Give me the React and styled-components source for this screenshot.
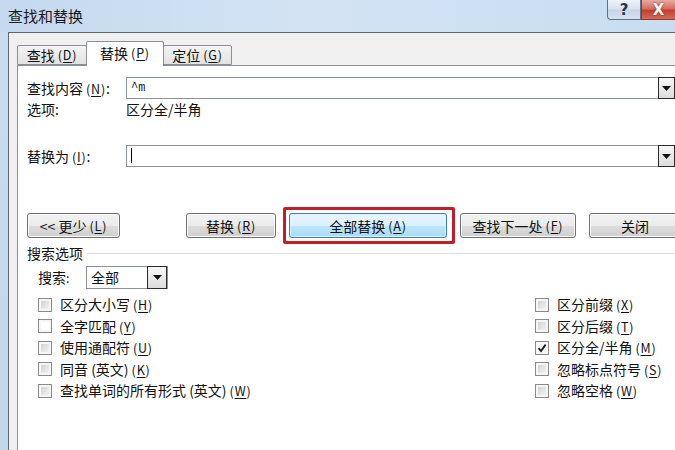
import React from "react";
import styled, { createGlobalStyle } from "styled-components";

const GlobalStyle = createGlobalStyle`
  body {
    margin: 0;
    background: #ffffff;
    font-family: "Noto Sans CJK SC", "Liberation Sans", sans-serif;
    color: #111;
  }
`;

const Window = styled.div`
  width: 675px;
  height: 450px;
  overflow: hidden;
  display: flex;
  flex-direction: column;
  background: linear-gradient(180deg, #cadcf0, #c2d6ec);
`;

const TitleBar = styled.div`
  height: 32px;
  flex-shrink: 0;
  display: flex;
  justify-content: space-between;
  align-items: flex-start;
  background: linear-gradient(90deg, #c4d9ef 0%, #d3e3f4 45%, #cde0f3 75%, #c9ddf1 100%);
`;

const Title = styled.div`
  padding: 7px 0 0 8px;
  font-size: 15px;
  line-height: 18px;
  color: #1a1a1a;
`;

const Controls = styled.div`
  display: flex;
`;

const CtrlButton = styled.div`
  width: ${(p) => (p.close ? "34px" : "34px")};
  height: 20px;
  display: flex;
  align-items: center;
  justify-content: center;
  box-sizing: border-box;
  border: 1px solid ${(p) => (p.close ? "#8e3a34" : "#5f7086")};
  border-top: none;
  border-right: ${(p) => (p.close ? "none" : "1px solid #5f7086")};
  border-radius: ${(p) => (p.close ? "0" : "0 0 0 4px")};
  background: ${(p) =>
    p.close
      ? "linear-gradient(180deg, #e9aaa0 0%, #d4705f 45%, #c4402e 55%, #d56b55 100%)"
      : "linear-gradient(180deg, #eef3f9 0%, #d9e3ee 45%, #c5d3e3 55%, #d8e3ef 100%)"};
  font: bold 15px "DejaVu Sans", sans-serif;
  color: ${(p) => (p.close ? "#fff" : "#1f3552")};
  text-shadow: ${(p) => (p.close ? "0 0 2px #6b1a12" : "none")};
`;

const Frame = styled.div`
  flex: 1;
  display: flex;
  padding-left: 8px;
  min-height: 0;
`;

const Dialog = styled.div`
  flex: 1;
  display: flex;
  flex-direction: column;
  background: #f0f0f0;
  border-left: 1px solid #5e6670;
  border-top: 1px solid #5e6670;
  padding: 8px 0 0 8px;
  min-height: 0;
`;

const TabStrip = styled.div`
  display: flex;
  align-items: flex-end;
  height: 24px;
  padding-left: 1px;
  position: relative;
  z-index: 1;
`;

const Tab = styled.div`
  box-sizing: border-box;
  width: ${(p) => p.w}px;
  height: ${(p) => (p.active ? "25px" : "20px")};
  margin-bottom: ${(p) => (p.active ? "-1px" : "0")};
  margin-left: -1px;
  border: 1px solid #8b8e96;
  border-bottom: ${(p) => (p.active ? "none" : "1px solid #8b8e96")};
  border-radius: 2px 2px 0 0;
  background: ${(p) =>
    p.active ? "#ffffff" : "linear-gradient(180deg, #f4f4f4, #e2e2e2)"};
  display: flex;
  align-items: center;
  justify-content: center;
  font-size: 14px;
  line-height: 18px;
  padding-bottom: ${(p) => (p.active ? "3px" : "0")};
`;

const Panel = styled.div`
  flex: 1;
  background: #ffffff;
  border: 1px solid #8b8e96;
  border-right: none;
  border-bottom: none;
  padding-left: 9px;
  display: flex;
  flex-direction: column;
`;

const FieldRow = styled.div`
  display: flex;
  align-items: center;
  height: 22px;
  margin-top: ${(p) => p.top}px;
`;

const Label = styled.div`
  width: ${(p) => p.w || 99}px;
  flex-shrink: 0;
  font-size: 14px;
  line-height: 18px;
  white-space: nowrap;
`;

const Key = styled.span`
  font-size: 12.5px;
  letter-spacing: 0.8px;
  margin-left: ${(p) => (p.tight ? "0" : "3px")};
  u {
    text-decoration-thickness: 1px;
    text-underline-offset: 2px;
  }
`;

const Combo = styled.div`
  width: 549px;
  height: 22px;
  box-sizing: border-box;
  display: flex;
  border: 1px solid #8e9299;
  border-right: none;
  background: #fff;
  flex-shrink: 0;
`;

const ComboText = styled.div`
  flex: 1;
  padding-left: 4px;
  font: 12px "Liberation Mono", monospace;
  line-height: 20px;
  color: #222;
`;

const Caret = styled.span`
  display: inline-block;
  width: 1px;
  height: 15px;
  margin-top: 2px;
  background: #000;
`;

const DropButton = styled.div`
  width: ${(p) => p.w || 17}px;
  box-sizing: border-box;
  border: 1px solid #2b2b2b;
  margin: -1px 0;
  background: linear-gradient(180deg, #f7f7f7, #dcdcdc);
  display: flex;
  align-items: center;
  justify-content: center;
`;

const Text = styled.div`
  font-size: 14px;
  line-height: 18px;
  margin-top: ${(p) => p.top || 0}px;
  display: flex;
  align-items: center;
`;

const ButtonRow = styled.div`
  display: flex;
  align-items: center;
  gap: 13px;
  margin-top: 46px;
  height: 25px;
`;

const Button = styled.div`
  box-sizing: border-box;
  width: ${(p) => p.w}px;
  height: 25px;
  flex-shrink: 0;
  margin-right: ${(p) => p.after || 0}px;
  border: 1px solid ${(p) => (p.focused ? "#3c7fb1" : "#707070")};
  border-radius: 3px;
  box-shadow: inset 0 0 0 1px ${(p) => (p.focused ? "#dff2fc" : "#fbfbfb")};
  background: ${(p) =>
    p.focused
      ? "linear-gradient(180deg, #eaf6fd 0%, #d9f0fc 50%, #bee6fd 52%, #a9dbf6 100%)"
      : "linear-gradient(180deg, #f2f2f2 0%, #ebebeb 50%, #dddddd 52%, #cfcfcf 100%)"};
  display: flex;
  align-items: center;
  justify-content: center;
  font-size: 14px;
  line-height: 18px;
  white-space: nowrap;
`;

const Highlight = styled.div`
  display: flex;
  margin: -6px -8px -6px -6px;
  padding: 3px 5px 3px 3px;
  border: 3px solid #c41d2a;
  border-radius: 2px;
`;

const Section = styled.div`
  display: flex;
  align-items: center;
  gap: 4px;
  margin-top: 6px;
  height: 18px;
  font-size: 14px;
  line-height: 18px;
  &::after {
    content: "";
    flex: 1;
    height: 1px;
    background: #d5dde5;
  }
`;

const SearchRow = styled.div`
  display: flex;
  align-items: center;
  margin-top: 4px;
  padding-left: 11px;
  height: 23px;
`;

const Select = styled.div`
  width: 82px;
  height: 23px;
  box-sizing: border-box;
  border: 1px solid #8e9299;
  display: flex;
  background: #fff;
`;

const SelectText = styled.div`
  flex: 1;
  padding-left: 4px;
  font-size: 14px;
  line-height: 21px;
`;

const Options = styled.div`
  display: grid;
  grid-template-columns: 497px 1fr;
  grid-auto-flow: column;
  grid-template-rows: repeat(5, 21.5px);
  margin-top: 5px;
  padding-left: 11px;
`;

const Option = styled.div`
  display: flex;
  align-items: center;
  gap: 8px;
  font-size: 14px;
  line-height: 18px;
  white-space: nowrap;
`;

const Box = styled.div`
  width: 14px;
  height: 14px;
  box-sizing: border-box;
  flex-shrink: 0;
  border: 1px solid #8a8a8a;
  background: ${(p) =>
    p.plain
      ? "#fff"
      : p.checked
      ? "#f4f4f4"
      : "linear-gradient(135deg, #c4c8ce 0%, #e4e6e9 55%, #f6f6f6 100%)"};
  box-shadow: inset 0 0 0 2px #f6f6f6;
  display: flex;
  align-items: center;
  justify-content: center;
`;

const Arrow = () => (
  <svg width="9" height="5" viewBox="0 0 9 5">
    <polygon points="0,0 9,0 4.5,5" fill="#111" />
  </svg>
);

const Check = () => (
  <svg width="10" height="10" viewBox="0 0 10 10">
    <path d="M1.5 5.2 L4 8 L8.6 1.6" fill="none" stroke="#1c1c1c" strokeWidth="1.8" />
  </svg>
);

const K = ({ k }) => (
  <Key>
    (<u>{k}</u>)
  </Key>
);

const leftOptions = [
  ["区分大小写", "H", ""],
  ["全字匹配", "Y", "plain"],
  ["使用通配符", "U", ""],
  ["同音 (英文)", "K", ""],
  ["查找单词的所有形式 (英文)", "W", ""],
];

const rightOptions = [
  ["区分前缀", "X", ""],
  ["区分后缀", "T", ""],
  ["区分全/半角", "M", "checked"],
  ["忽略标点符号", "S", ""],
  ["忽略空格", "W", ""],
];

function App() {
  return (
    <Window>
      <GlobalStyle />
      <TitleBar>
        <Title>查找和替换</Title>
        <Controls>
          <CtrlButton>?</CtrlButton>
          <CtrlButton close>X</CtrlButton>
        </Controls>
      </TitleBar>
      <Frame>
        <Dialog>
          <TabStrip>
            <Tab w={70}>
              查找<K k="D" />
            </Tab>
            <Tab w={78} active>
              替换<K k="P" />
            </Tab>
            <Tab w={69}>
              定位<K k="G" />
            </Tab>
          </TabStrip>
          <Panel>
            <FieldRow top={11}>
              <Label>
                查找内容<K k="N" />:
              </Label>
              <Combo>
                <ComboText>^m</ComboText>
                <DropButton>
                  <Arrow />
                </DropButton>
              </Combo>
            </FieldRow>
            <Text top={1}>
              <Label>选项:</Label>区分全/半角
            </Text>
            <FieldRow top={27}>
              <Label>
                替换为<K k="I" />:
              </Label>
              <Combo>
                <ComboText>
                  <Caret />
                </ComboText>
                <DropButton>
                  <Arrow />
                </DropButton>
              </Combo>
            </FieldRow>
            <ButtonRow>
              <Button w={93} after={53}>
                &lt;&lt; 更少<K k="L" />
              </Button>
              <Button w={90}>
                替换<K k="R" />
              </Button>
              <Highlight>
                <Button w={158} focused>
                  全部替换<K k="A" />
                </Button>
              </Highlight>
              <Button w={116}>
                查找下一处<K k="F" />
              </Button>
              <Button w={92}>关闭</Button>
            </ButtonRow>
            <Section>搜索选项</Section>
            <SearchRow>
              <Label w={48}>
                搜索<Key tight>:</Key>
              </Label>
              <Select>
                <SelectText>全部</SelectText>
                <DropButton w={20}>
                  <Arrow />
                </DropButton>
              </Select>
            </SearchRow>
            <Options>
              {[...leftOptions, ...rightOptions].map(([label, k, kind], i) => (
                <Option key={i}>
                  <Box plain={kind === "plain"} checked={kind === "checked"}>
                    {kind === "checked" && <Check />}
                  </Box>
                  <span>
                    {label}
                    <K k={k} />
                  </span>
                </Option>
              ))}
            </Options>
          </Panel>
        </Dialog>
      </Frame>
    </Window>
  );
}

export default App;
